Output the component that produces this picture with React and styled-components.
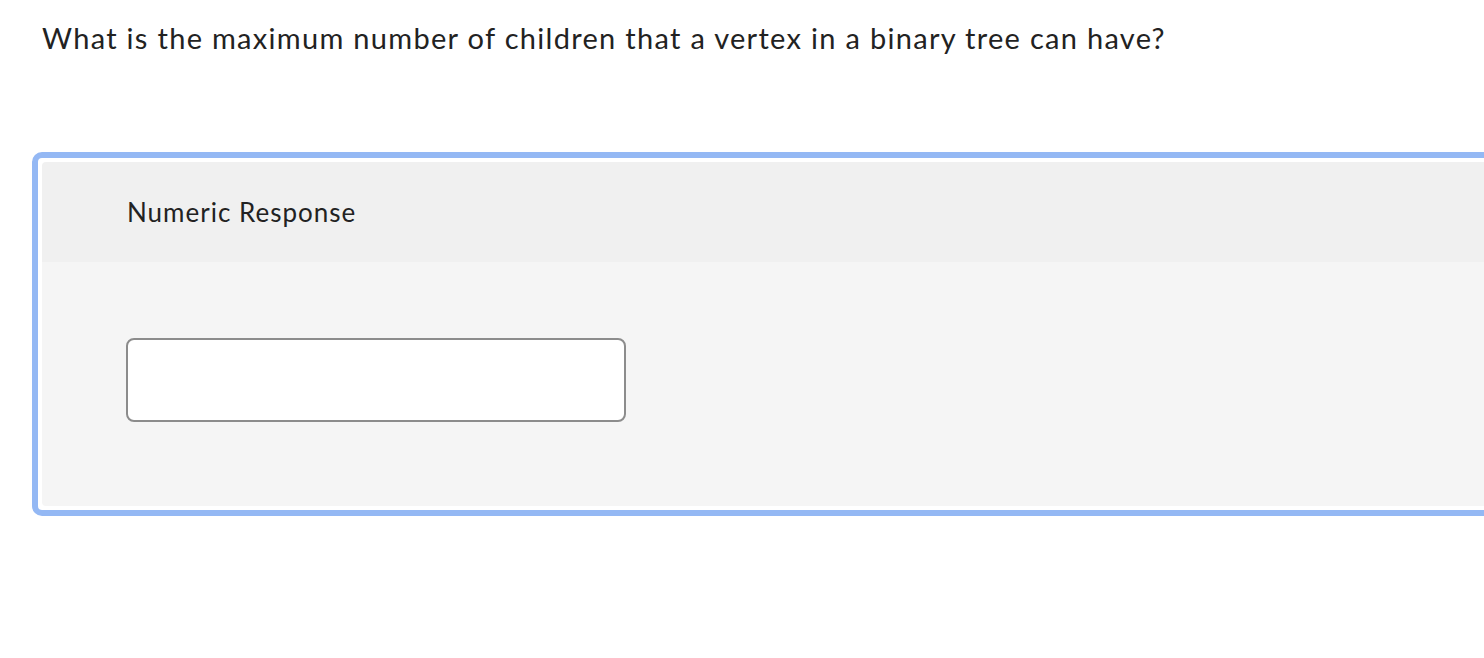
import React from "react";
import styled, { createGlobalStyle } from "styled-components";

const Global = createGlobalStyle`
  html, body { margin: 0; padding: 0; background: #ffffff; overflow: hidden; }
  body { font-family: Lato, "Open Sans", sans-serif; color: #222222; }
`;

const Page = styled.div`
  padding: 18px 0 0 32px;
  width: 1484px;
  height: 658px;
  box-sizing: border-box;
  overflow: hidden;
`;

const Question = styled.h1`
  margin: 0 0 0 10px;
  font-size: 29px;
  font-weight: 400;
  letter-spacing: 1.3px;
  line-height: 40px;
  color: #222222;
  white-space: nowrap;
`;

const Card = styled.section`
  margin-top: 94px;
  width: 1500px;
  border: 6px solid #94b8f4;
  border-radius: 10px;
  padding: 4px;
  background: #ffffff;
`;

const Header = styled.div`
  height: 100px;
  background: #f0f0f0;
  border-radius: 4px 0 0 0;
  display: flex;
  align-items: center;
  padding-left: 85px;
  font-size: 26px;
  letter-spacing: 1px;
  color: #222222;
`;

const Body = styled.div`
  height: 244px;
  background: #f5f5f5;
  border-radius: 0 0 0 4px;
  padding: 76px 0 0 84px;
  box-sizing: border-box;
`;

const Input = styled.input`
  display: block;
  width: 500px;
  height: 84px;
  box-sizing: border-box;
  border: 2px solid #8c8c8c;
  border-radius: 8px;
  background: #ffffff;
  font-size: 24px;
  padding: 0 16px;
  outline: none;
`;

export default function App() {
  return (
    <>
      <Global />
      <Page>
        <Question>What is the maximum number of children that a vertex in a binary tree can have?</Question>
        <Card>
          <Header>Numeric Response</Header>
          <Body>
            <Input type="text" aria-label="Numeric Response" />
          </Body>
        </Card>
      </Page>
    </>
  );
}
